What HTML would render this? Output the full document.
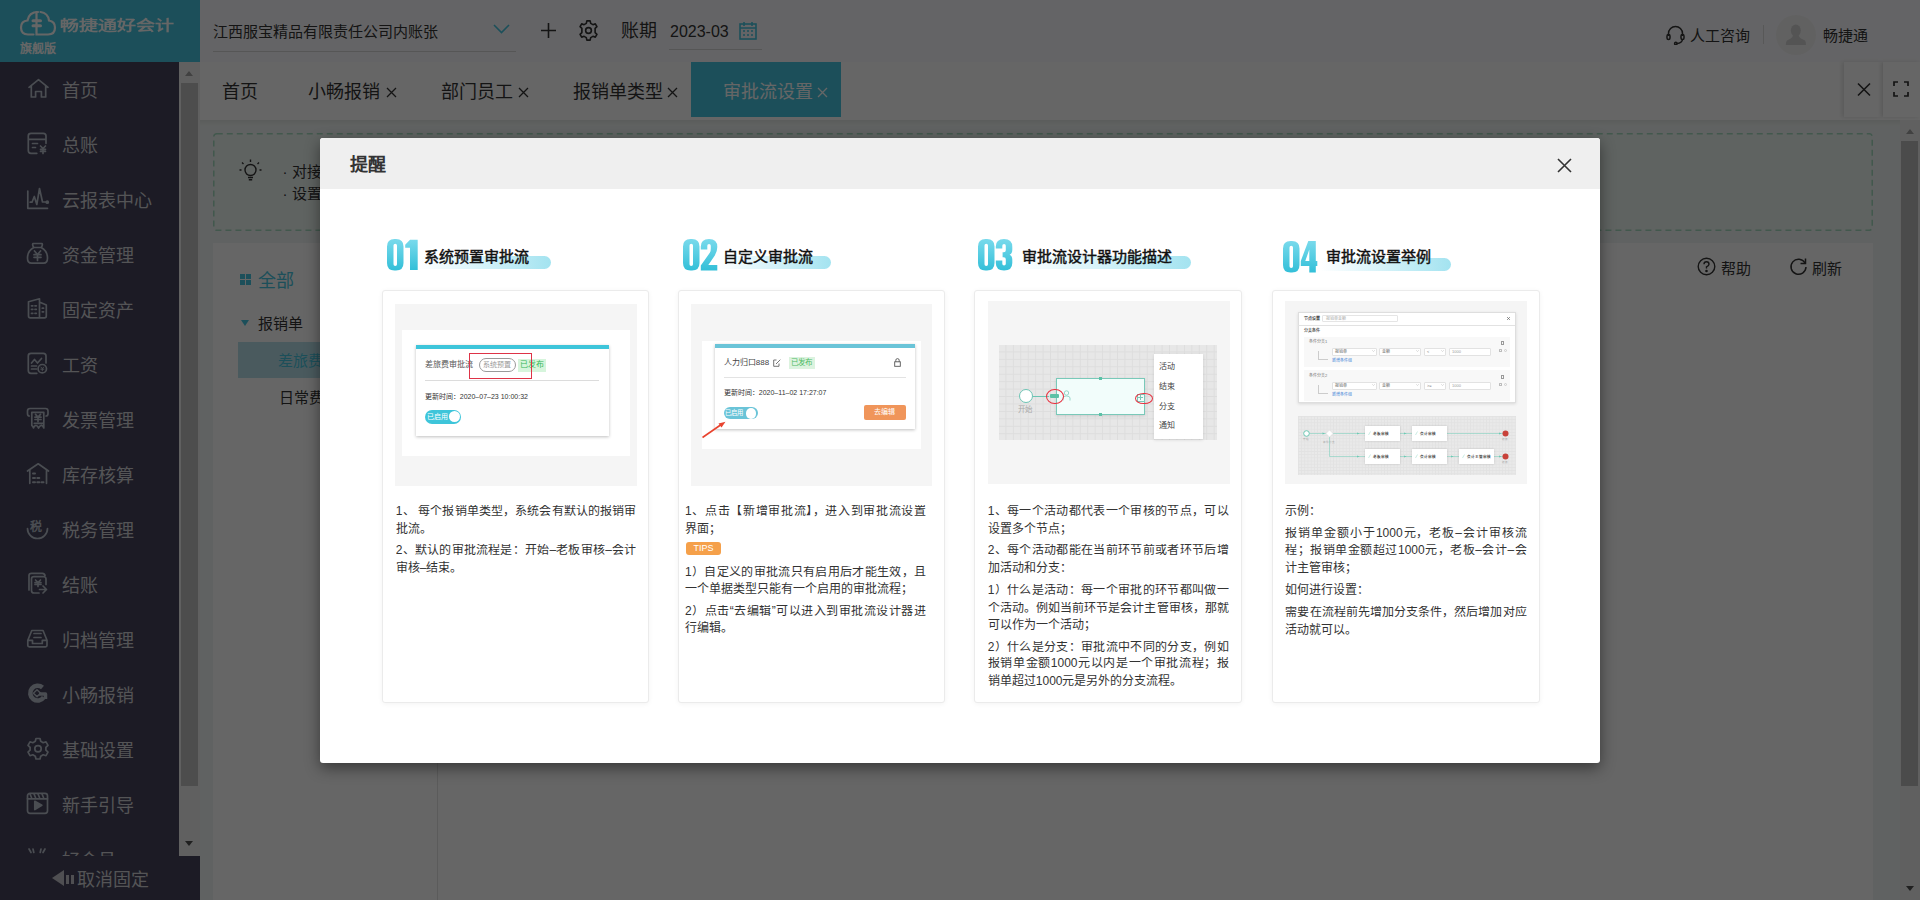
<!DOCTYPE html>
<html lang="zh-CN"><head><meta charset="utf-8">
<style>
*{box-sizing:border-box;margin:0;padding:0}
html,body{width:1920px;height:900px;overflow:hidden;font-family:"Liberation Sans",sans-serif;background:#f1f6f4}
.a{position:absolute;white-space:nowrap;line-height:1}
#side{position:absolute;left:0;top:0;width:200px;height:900px;background:#46445c;overflow:hidden}
#logo{position:absolute;left:0;top:0;width:200px;height:62px;background:#46c6e1}
#menu{position:absolute;left:0;top:62px;width:180px;height:794px;overflow:hidden}
.mi{position:absolute;left:0;width:180px;height:55px;color:#d2d3d8;font-size:18px}
.mi span{position:absolute;left:62.3px;top:19.5px;line-height:1}
.mi svg{position:absolute;left:22px;top:13px;width:30px;height:30px;fill:none;stroke:#b9c0cc;stroke-width:1.7;stroke-linecap:round;stroke-linejoin:round}
#sbar{position:absolute;left:179px;top:62px;width:21px;height:794px;background:#f1f1f1}
#hdr{position:absolute;left:200px;top:0;width:1720px;height:62px;background:#fbfbfe}
#tabs{position:absolute;left:200px;top:62px;width:1720px;height:58px;background:#fff}
.tab{position:absolute;top:21px;font-size:18px;color:#333;line-height:1}
.x{font-size:16px;color:#333}
#content{position:absolute;left:200px;top:120px;width:1700px;height:780px;background:#f1f6f4}
#rbar{position:absolute;left:1900px;top:120px;width:20px;height:780px;background:#f1f1f1}
#ov{position:absolute;left:0;top:0;width:1920px;height:900px;background:rgba(0,0,0,.6)}
#modal{position:absolute;left:320px;top:138px;width:1280px;height:625px;background:#fff;border-radius:3px;box-shadow:0 5px 15px rgba(0,0,0,.45);overflow:hidden}
#mh{position:absolute;left:0;top:0;width:1280px;height:51px;background:#efefef}
.card{position:absolute;top:290.3px;width:267.7px;height:413px;border:1px solid #ebebeb;border-radius:3px;box-shadow:0 1px 5px rgba(0,0,0,.05);background:#fff}
.pl{position:absolute;font-size:12px;line-height:1;color:#333;white-space:nowrap}
.pl.j{text-align:justify;text-align-last:justify;white-space:normal;height:13px;overflow:hidden}
.hl{height:13px;border-radius:0 7px 7px 0;background:linear-gradient(90deg,rgba(169,229,242,0),rgba(169,229,242,.5) 50%,#a3e3f0)}
.ht{font-size:15px;color:#111;-webkit-text-stroke:.45px #111}
.tn{font-size:8px}
.t4{font-size:4px}
.sel{height:8px;background:#fff;border:.7px solid #e2e2e2;border-radius:1px}
.grid{background-color:#e9e9e9;background-image:linear-gradient(#e2e2e2 .5px,transparent .5px),linear-gradient(90deg,#e2e2e2 .5px,transparent .5px);background-size:3.2px 3.2px}
.grid3{background-color:#e7e7e7;background-image:linear-gradient(#dddddd .8px,transparent .8px),linear-gradient(90deg,#dddddd .8px,transparent .8px);background-size:7.45px 7.45px;background-position:-1px -1px}
</style></head><body>

<div id="side">
  <div id="logo">
    <svg class="a" style="left:19px;top:10px" width="38" height="27" viewBox="0 0 38 27" fill="none" stroke="#fff" stroke-width="2.2" stroke-linecap="round">
      <path d="M14.5 24.5 H9 Q2 24.5 2 17.5 Q2 11 8.5 10.5 Q10 2 19 2"/>
      <path d="M21.5 2 Q29 3 30 10.5 Q36 11.5 36 17.5 Q36 24.5 29 24.5 H17.5 V2"/>
      <path d="M14 10.8 H21.5 M14 15.8 H21.5" stroke-width="3"/>
    </svg>
    <div class="a" style="left:60px;top:18px;font-size:19px;color:#fff;font-weight:bold;transform:scale(1,.72);transform-origin:0 0">畅捷通好会计</div>
    <div class="a" style="left:20px;top:43px;font-size:12px;color:#fff;font-weight:bold">旗舰版</div>
  </div>
  <div id="menu">
    <div class="mi" style="top:0"><svg viewBox="0 0 30 30"><path d="M7 12.3 L16.5 4.6 L26 12.3 M9.3 10.5 V22 H13.6 V16.5 H19.4 V22 H23.7 V10.5"/></svg><span>首页</span></div>
    <div class="mi" style="top:55px"><svg viewBox="0 0 30 30"><path d="M24 13.3 V6 Q24 3.3 21.3 3.3 H9 Q6.3 3.3 6.3 6 V20.5 Q6.3 23.3 9 23.3 H14.8 M6.3 9.3 H24 M10.5 13.5 H15.5 M10.5 17.5 H13.5 M18.5 16 L21 18.5 L23.5 16 M21 18.5 V23.5 M18.5 19.3 H23.5 M18.5 21.3 H23.5"/></svg><span>总账</span></div>
    <div class="mi" style="top:110px"><svg viewBox="0 0 30 30"><path d="M5.8 6 V23.3 H25.5 M8.2 17.2 H10 L12.3 11.5 L14.8 19.5 L17.5 3.5 L20.5 17 H24.5"/><circle cx="25.3" cy="17.2" r="1" fill="#b9c0cc"/></svg><span>云报表中心</span></div>
    <div class="mi" style="top:165px"><svg viewBox="0 0 30 30"><path d="M11.8 7.5 Q10 5 11 3.5 H20 Q21 5 19.2 7.5 H11.8 Q5.5 11 5.5 18 Q5.5 23.2 9.5 23.2 H21.5 Q25.5 23.2 25.5 18 Q25.5 11 19.2 7.5 M12.5 11 L15.5 14.5 L18.5 11 M15.5 14.5 V20.5 M12 14.7 H19 M12 17.3 H19"/></svg><span>资金管理</span></div>
    <div class="mi" style="top:220px"><svg viewBox="0 0 30 30"><path d="M6.5 21 V6.8 L17.5 3.8 V22.8 M6.5 21 Q6.5 22.8 8.3 22.8 H22.5 Q24.3 22.8 24.3 21 V10 L18 7.3"/><path d="M9.5 10.8 H10.8 M13 10.8 H14.3 M9.5 14.3 H10.8 M13 14.3 H14.3 M9.5 18.3 H10.8 M13 18.3 H14.3 M20.3 13.2 H21.5 M20.3 16.8 H21.5" stroke-width="1.8"/></svg><span>固定资产</span></div>
    <div class="mi" style="top:275px"><svg viewBox="0 0 30 30"><path d="M24 13 V6 Q24 3.3 21.3 3.3 H9 Q6.3 3.3 6.3 6 V20.5 Q6.3 23.3 9 23.3 H14.8 M9.5 13 L12.5 9.5 L15.5 13 L19.5 8.5 M9.5 16 H14.5 M9.5 19 H14.5"/><circle cx="20.3" cy="18.7" r="4.2"/><path d="M18.8 17 L20.3 18.5 L21.8 17 M20.3 18.5 V20.8 M18.8 19.2 H21.8" stroke-width="1"/></svg><span>工资</span></div>
    <div class="mi" style="top:330px"><svg viewBox="0 0 30 30"><path d="M7.3 11 Q5.5 11 5.5 8.5 V6 Q5.5 3.5 8 3.5 H23.5 Q26 3.5 26 6 V8.5 Q26 11 24 11 M9.8 7.3 H21.8 V23 Q20.5 20 19 20.5 Q17.5 21 16.5 23 Q15.5 20.5 14 20.5 Q12.3 20.5 11.5 23 Q10.8 21 9.8 20.5 Z M13.5 9.3 L16 12 L18.5 9.3 M16 12 V16.5 M13 12.2 H19 M13 14.5 H19 M12.3 18.3 H20.8"/></svg><span>发票管理</span></div>
    <div class="mi" style="top:385px"><svg viewBox="0 0 30 30"><path d="M5.5 11 L16.2 3.8 L26.5 11 M7.8 10 V23.3 M24.5 10 V23.3"/><path d="M11 13.5 H13 M11 18 H13 M15.3 18 H17.3 M11 22.3 H13 M15.3 22.3 H17.3 M19.5 22.3 H21.5" stroke-width="2"/></svg><span>库存核算</span></div>
    <div class="mi" style="top:440px"><svg viewBox="0 0 30 30"><path d="M5.5 13.5 A10 10 0 0 0 25.5 13.5"/><text x="7.5" y="15.5" font-size="12" font-weight="bold" fill="#b9c0cc" stroke="none">税</text></svg><span>税务管理</span></div>
    <div class="mi" style="top:495px"><svg viewBox="0 0 30 30"><path d="M7 20 V5.5 Q7 3.3 9.5 3.3 H20.5 Q22.5 3.3 23 5.5 M24 14.5 V9 Q24 6.7 21.5 6.7 H12 Q9.5 6.7 9.5 9 V20.5 Q9.5 23 12 23 H17 M13.5 10 L16 12.5 L18.5 10 M16 12.5 V16.5 M13 12.7 H19 M13 14.5 H19 M17.5 19.5 H24.5 M21 16 L24.5 19.5 L21 23"/></svg><span>结账</span></div>
    <div class="mi" style="top:550px"><svg viewBox="0 0 30 30"><path d="M5.8 15.3 L9.8 5.5 H21 L25 15.3 V20.5 Q25 21.8 23.5 21.8 H7.3 Q5.8 21.8 5.8 20.5 Z M5.8 15.3 H10.5 V18.5 H20.3 V15.3 H25 M12 8.5 H19 M12 12.5 H19"/></svg><span>归档管理</span></div>
    <div class="mi" style="top:605px"><svg viewBox="0 0 30 30"><path d="M20.5 7.5 A7.4 7.4 0 1 0 21.8 17.3" stroke-width="4.6" stroke-linecap="butt"/><path d="M17 14 H23.5 V19" stroke-width="3.5" stroke-linecap="butt"/><path d="M15 9.8 L18.6 13.2 L15 16.6 L11.4 13.2 Z" stroke-width="1.5"/></svg><span>小畅报销</span></div>
    <div class="mi" style="top:660px"><svg viewBox="0 0 30 30"><path d="M14 3.5 H18 L18.7 6.3 L21.2 7.7 L24 6.8 L26 10.3 L23.9 12.3 V15.2 L26 17.2 L24 20.7 L21.2 19.8 L18.7 21.2 L18 24 H14 L13.3 21.2 L10.8 19.8 L8 20.7 L6 17.2 L8.1 15.2 V12.3 L6 10.3 L8 6.8 L10.8 7.7 L13.3 6.3 Z"/><circle cx="16" cy="13.75" r="3.2"/></svg><span>基础设置</span></div>
    <div class="mi" style="top:715px"><svg viewBox="0 0 30 30"><rect x="5.5" y="3.3" width="20" height="20" rx="2.5"/><path d="M5.5 8.8 H25.5 M8 4 L9.5 7.5 M12 4 L13.5 7.5 M16 4 L17.5 7.5 M20 4 L21.5 7.5"/><path d="M12.8 11.3 L19.8 15.3 L12.8 19.5 Z" fill="#b9c0cc"/></svg><span>新手引导</span></div>
    <div class="mi" style="top:770px"><svg viewBox="0 0 30 30"><path d="M7 4 L9 7.5 M11 4 L11.8 7.5 M19 4 L18.2 7.5 M23 4 L21 7.5"/></svg><span>好会员</span></div>
  </div>
  <div id="sbar">
    <div class="a" style="left:6px;top:9px;width:0;height:0;border-left:4.5px solid transparent;border-right:4.5px solid transparent;border-bottom:5px solid #a3a3a3"></div>
    <div class="a" style="left:2px;top:21px;width:17px;height:703px;background:#c1c1c1"></div>
    <div class="a" style="left:6px;top:779px;width:0;height:0;border-left:4.5px solid transparent;border-right:4.5px solid transparent;border-top:5px solid #505050"></div>
  </div>
  <div class="a" style="left:52px;top:870px;width:0;height:0;border-top:8.5px solid transparent;border-bottom:8.5px solid transparent;border-right:12px solid #c5c6cc"></div>
  <div class="a" style="left:66px;top:875px;width:3px;height:9px;background:#c5c6cc"></div>
  <div class="a" style="left:71px;top:875px;width:3px;height:9px;background:#c5c6cc"></div>
  <div class="a" style="left:77px;top:871px;font-size:18px;color:#d2d3d8">取消固定</div>
</div>

<div id="hdr">
  <div class="a" style="left:13px;top:24px;font-size:15px;color:#333">江西服宝精品有限责任公司内账张</div>
  <svg class="a" style="left:293px;top:24px" width="17" height="10" viewBox="0 0 17 10"><path d="M1 1 L8.5 8.5 L16 1" fill="none" stroke="#46c6e1" stroke-width="1.6"/></svg>
  <div class="a" style="left:13px;top:51px;width:303px;height:1px;background:#d8d8d8"></div>
  <svg class="a" style="left:340px;top:22px" width="17" height="17" viewBox="0 0 17 17"><path d="M1 8.5 H16 M8.5 1 V16" stroke="#333" stroke-width="1.6"/></svg>
  <svg class="a" style="left:377px;top:19px" width="23" height="23" viewBox="0 0 24 24"><path d="M10.3 2 H13.7 L14.3 4.6 L16.6 5.9 L19.1 5.1 L20.8 8 L18.9 9.8 V14.2 L20.8 16 L19.1 18.9 L16.6 18.1 L14.3 19.4 L13.7 22 H10.3 L9.7 19.4 L7.4 18.1 L4.9 18.9 L3.2 16 L5.1 14.2 V9.8 L3.2 8 L4.9 5.1 L7.4 5.9 L9.7 4.6 Z" fill="none" stroke="#333" stroke-width="1.7" stroke-linejoin="round"/><circle cx="12" cy="12" r="3" fill="none" stroke="#333" stroke-width="1.7"/></svg>
  <div class="a" style="left:421px;top:22px;font-size:18px;color:#333">账期</div>
  <div class="a" style="left:470px;top:23.5px;font-size:16px;color:#333">2023-03</div>
  <svg class="a" style="left:539px;top:21px" width="18" height="19" viewBox="0 0 18 19"><rect x="1" y="3" width="16" height="15" fill="none" stroke="#46c6e1" stroke-width="1.6"/><path d="M1 7 H17 M5 1 V5 M13 1 V5" stroke="#46c6e1" stroke-width="1.6"/><path d="M4 10 H6 M8 10 H10 M12 10 H14 M4 14 H6 M8 14 H10 M12 14 H14" stroke="#46c6e1" stroke-width="1.5"/></svg>
  <div class="a" style="left:469px;top:49px;width:93px;height:1px;background:#d8d8d8"></div>
  <svg class="a" style="left:1466px;top:25px" width="19" height="20" viewBox="0 0 19 20" fill="none" stroke="#333" stroke-width="1.5"><path d="M2.5 11 V8.5 A7 7 0 0 1 16.5 8.5 V11"/><rect x="1" y="9.5" width="3" height="5" rx="1.5"/><rect x="15" y="9.5" width="3" height="5" rx="1.5"/><path d="M16.5 14.5 Q16 18 11 18.5"/><circle cx="9.8" cy="18.5" r="1.2"/></svg>
  <div class="a" style="left:1490px;top:28px;font-size:15px;color:#333">人工咨询</div>
  <div class="a" style="left:1563px;top:25px;width:1px;height:19px;background:#ddd"></div>
  <div class="a" style="left:1576px;top:15px;width:40px;height:40px;border-radius:50%;background:#f2f2f3;overflow:hidden">
    <svg class="a" style="left:0;top:0" width="40" height="40" viewBox="0 0 40 40"><ellipse cx="19.8" cy="15.5" rx="5" ry="6" fill="#d2d2d2"/><path d="M17 20 H22.6 Q23 22.5 25 23.5 L29 25.5 Q30 26.5 30 30 H9.8 Q9.8 26.5 11 25.5 L14.8 23.5 Q16.8 22.5 17 20 Z" fill="#d2d2d2"/></svg>
  </div>
  <div class="a" style="left:1623px;top:28px;font-size:15px;color:#333">畅捷通</div>
</div>
<div id="tabs">
  <div class="tab" style="left:22px">首页</div>
  <div class="tab" style="left:108px">小畅报销</div><svg class="a" style="left:185.5px;top:25px" width="11" height="11" viewBox="0 0 11 11"><path d="M1 1 L10 10 M10 1 L1 10" stroke="#333" stroke-width="1.3"/></svg>
  <div class="tab" style="left:241px">部门员工</div><svg class="a" style="left:317.5px;top:25px" width="11" height="11" viewBox="0 0 11 11"><path d="M1 1 L10 10 M10 1 L1 10" stroke="#333" stroke-width="1.3"/></svg>
  <div class="tab" style="left:373px">报销单类型</div><svg class="a" style="left:466.5px;top:25px" width="11" height="11" viewBox="0 0 11 11"><path d="M1 1 L10 10 M10 1 L1 10" stroke="#333" stroke-width="1.3"/></svg>
  <div class="a" style="left:491px;top:0;width:150px;height:55px;background:#46c6e1"></div>
  <div class="tab" style="left:523px;color:#fff">审批流设置</div><svg class="a" style="left:616.5px;top:25px" width="11" height="11" viewBox="0 0 11 11"><path d="M1 1 L10 10 M10 1 L1 10" stroke="#fff" stroke-width="1.3"/></svg>
  <div class="a" style="left:1644px;top:0;width:38px;height:55px;background:#fff;box-shadow:-2px 0 4px rgba(0,0,0,.12)"></div>
  <svg class="a" style="left:1657px;top:20px" width="14" height="15" viewBox="0 0 14 15"><path d="M1 1.5 L13 13.5 M13 1.5 L1 13.5" stroke="#333" stroke-width="1.6"/></svg>
  <div class="a" style="left:1683px;top:0;width:37px;height:55px;background:#fff;box-shadow:-2px 0 4px rgba(0,0,0,.12)"></div>
  <svg class="a" style="left:1693px;top:19px" width="16" height="16" viewBox="0 0 16 16" fill="none" stroke="#333" stroke-width="1.7"><path d="M1 5 V1 H5 M11 1 H15 V5 M15 11 V15 H11 M5 15 H1 V11"/></svg>
</div>
<div id="content">
  <div class="a" style="left:0;top:0;width:1700px;height:6px;background:linear-gradient(rgba(0,0,0,.06),rgba(0,0,0,0))"></div>
  <svg class="a" style="left:13px;top:13px" width="1660" height="98"><rect x="0.75" y="0.75" width="1658.5" height="96.5" rx="3" fill="#eef7f3" stroke="#a6dcc0" stroke-width="1.6" stroke-dasharray="6 4"/></svg>
  <svg class="a" style="left:38px;top:38px" width="25" height="25" viewBox="0 0 25 25" fill="none" stroke="#333" stroke-width="1.4"><circle cx="12.5" cy="12" r="5.5"/><path d="M10 19.5 H15 M10.8 21.8 H14.2 M12.5 1.5 V4 M4 4.5 L5.5 6 M21 4.5 L19.5 6 M1.5 12 H3.5 M21.5 12 H23.5"/></svg>
  <div class="a" style="left:82.5px;top:43.5px;font-size:15px;color:#333">· 对接</div>
  <div class="a" style="left:82.5px;top:65.5px;font-size:15px;color:#333">· 设置</div>
  <div class="a" style="left:13px;top:123px;width:1660px;height:657px;background:#fff"></div>
  <div class="a" style="left:237px;top:123px;width:1px;height:657px;background:#e4e4e4"></div>
  <div class="a" style="left:40px;top:154px;width:5px;height:5px;background:#46c6e1;box-shadow:6px 0 #46c6e1,0 6px #46c6e1,6px 6px #46c6e1"></div>
  <div class="a" style="left:58px;top:152px;font-size:18px;color:#46c6e1">全部</div>
  <div class="a" style="left:41px;top:200px;width:0;height:0;border-left:4.5px solid transparent;border-right:4.5px solid transparent;border-top:6px solid #46c6e1"></div>
  <div class="a" style="left:58px;top:196px;font-size:15px;color:#333">报销单</div>
  <div class="a" style="left:38px;top:222px;width:199px;height:36px;background:#b9e1ea"></div>
  <div class="a" style="left:78px;top:233px;font-size:15px;color:#46c6e1">差旅费审批流</div>
  <div class="a" style="left:79px;top:270px;font-size:15px;color:#333">日常费用报销</div>
  <svg class="a" style="left:1497px;top:137px" width="19" height="19" viewBox="0 0 19 19" fill="none" stroke="#333" stroke-width="1.4"><circle cx="9.5" cy="9.5" r="8.3"/><path d="M7 7.3 Q7 4.8 9.5 4.8 Q12 4.8 12 7.2 Q12 8.7 9.5 9.8 V11.5"/><circle cx="9.5" cy="14" r=".6" fill="#333"/></svg>
  <div class="a" style="left:1521px;top:141px;font-size:15px;color:#333">帮助</div>
  <svg class="a" style="left:1589px;top:137px" width="19" height="19" viewBox="0 0 19 19" fill="none" stroke="#333" stroke-width="1.5"><path d="M16 6 A7.5 7.5 0 1 0 17 10"/><path d="M16.5 1.5 V6.5 H11.5"/></svg>
  <div class="a" style="left:1612px;top:141px;font-size:15px;color:#333">刷新</div>
</div>
<div id="rbar">
  <div class="a" style="left:6px;top:9px;width:0;height:0;border-left:4.5px solid transparent;border-right:4.5px solid transparent;border-bottom:5px solid #a3a3a3"></div>
  <div class="a" style="left:1px;top:21px;width:17px;height:645px;background:#bcbcbc"></div>
  <div class="a" style="left:6px;top:766px;width:0;height:0;border-left:4.5px solid transparent;border-right:4.5px solid transparent;border-top:5px solid #505050"></div>
</div>
<div id="ov"></div>
<div id="modal">
  <div id="mh"></div>
  <div class="a" style="left:30px;top:18px;font-size:18px;font-weight:bold;color:#333">提醒</div>
  <svg class="a" style="left:1237px;top:20px" width="15" height="15" viewBox="0 0 15 15"><path d="M1 1 L14 14 M14 1 L1 14" stroke="#333" stroke-width="1.6"/></svg>
  <div class="a" style="left:-320px;top:-138px;width:1920px;height:900px">
<svg class="a" style="left:387px;top:239px" width="36" height="32" viewBox="0 0 36 32"><defs><linearGradient id="g1" x1="0" y1="0" x2="0" y2="1"><stop offset="0" stop-color="#79daec"/><stop offset="1" stop-color="#33bfd8"/></linearGradient></defs><g fill="url(#g1)"><path fill-rule="evenodd" d="M7.5 0 H9 Q16.5 0 16.5 7.5 V24 Q16.5 31.5 9 31.5 H7.5 Q0 31.5 0 24 V7.5 Q0 0 7.5 0 Z M8.25 4.8 Q6.5 4.8 6.5 6.5 V25.3 Q6.5 27 8.25 27 Q10 27 10 25.3 V6.5 Q10 4.8 8.25 4.8 Z"/><g transform="translate(16.5,0)"></g></g><g fill="url(#g1)" transform="translate(18.2,0)"><path d="M4.8 0.8 H12.5 V31 H4.8 V8.8 H0 V5.7 Z"/></g></svg>
<div class="a hl" style="left:418px;top:256px;width:132.5px"></div>
<div class="a ht" style="left:424px;top:249px">系统预置审批流</div><svg class="a" style="left:683.3px;top:239px" width="36" height="32" viewBox="0 0 36 32"><defs><linearGradient id="g2" x1="0" y1="0" x2="0" y2="1"><stop offset="0" stop-color="#79daec"/><stop offset="1" stop-color="#33bfd8"/></linearGradient></defs><g fill="url(#g2)"><path fill-rule="evenodd" d="M7.5 0 H9 Q16.5 0 16.5 7.5 V24 Q16.5 31.5 9 31.5 H7.5 Q0 31.5 0 24 V7.5 Q0 0 7.5 0 Z M8.25 4.8 Q6.5 4.8 6.5 6.5 V25.3 Q6.5 27 8.25 27 Q10 27 10 25.3 V6.5 Q10 4.8 8.25 4.8 Z"/><g transform="translate(16.5,0)"></g></g><g fill="url(#g2)" transform="translate(17.8,0)"><path d="M0 10.5 V7.5 Q0 0 8.25 0 Q16.5 0 16.5 8 Q16.5 12.5 14 16.5 L7.5 26 H16.5 V31.5 H0 V26.5 L9.2 13.5 Q10 12 10 9.5 V6.8 Q10 5 8.25 5 Q6.5 5 6.5 6.8 V10.5 Z"/></g></svg>
<div class="a hl" style="left:717px;top:256px;width:114px"></div>
<div class="a ht" style="left:723px;top:249px">自定义审批流</div><svg class="a" style="left:977.8px;top:239px" width="36" height="32" viewBox="0 0 36 32"><defs><linearGradient id="g3" x1="0" y1="0" x2="0" y2="1"><stop offset="0" stop-color="#79daec"/><stop offset="1" stop-color="#33bfd8"/></linearGradient></defs><g fill="url(#g3)"><path fill-rule="evenodd" d="M7.5 0 H9 Q16.5 0 16.5 7.5 V24 Q16.5 31.5 9 31.5 H7.5 Q0 31.5 0 24 V7.5 Q0 0 7.5 0 Z M8.25 4.8 Q6.5 4.8 6.5 6.5 V25.3 Q6.5 27 8.25 27 Q10 27 10 25.3 V6.5 Q10 4.8 8.25 4.8 Z"/><g transform="translate(16.5,0)"></g></g><g fill="url(#g3)" transform="translate(17.8,0)"><path d="M0 9.5 V7.5 Q0 0 8.25 0 Q16.5 0 16.5 8 V11 Q16.5 14.5 13.8 15.75 Q16.5 17 16.5 20.5 V24 Q16.5 31.5 8.25 31.5 Q0 31.5 0 24 V21.5 H6.5 V24.8 Q6.5 26.5 8.25 26.5 Q10 26.5 10 24.8 V20.3 Q10 18.2 8 18.2 H6.8 V13.3 H8 Q10 13.3 10 11.3 V6.8 Q10 5 8.25 5 Q6.5 5 6.5 6.8 V9.5 Z"/></g></svg>
<div class="a hl" style="left:1015.6px;top:256px;width:175.39999999999998px"></div>
<div class="a ht" style="left:1021.6px;top:249px">审批流设计器功能描述</div><svg class="a" style="left:1282.5px;top:241px" width="36" height="32" viewBox="0 0 36 32"><defs><linearGradient id="g4" x1="0" y1="0" x2="0" y2="1"><stop offset="0" stop-color="#79daec"/><stop offset="1" stop-color="#33bfd8"/></linearGradient></defs><g fill="url(#g4)"><path fill-rule="evenodd" d="M7.5 0 H9 Q16.5 0 16.5 7.5 V24 Q16.5 31.5 9 31.5 H7.5 Q0 31.5 0 24 V7.5 Q0 0 7.5 0 Z M8.25 4.8 Q6.5 4.8 6.5 6.5 V25.3 Q6.5 27 8.25 27 Q10 27 10 25.3 V6.5 Q10 4.8 8.25 4.8 Z"/><g transform="translate(16.5,0)"></g></g><g fill="url(#g4)" transform="translate(17.8,0)"><path fill-rule="evenodd" d="M7.5 0 H15 V20 H16.5 V25 H15 V31.5 H8.5 V25 H0 V20 Z M8.5 8.5 L4.5 20 H8.5 Z"/></g></svg>
<div class="a hl" style="left:1320px;top:258px;width:131px"></div>
<div class="a ht" style="left:1326px;top:249px">审批流设置举例</div>
  <div class="card" style="left:381.7px"></div>
  <div class="card" style="left:677.8px"></div>
  <div class="card" style="left:974.4px"></div>
  <div class="card" style="left:1271.9px"></div>
<div class="pl j" style="left:395.8px;top:504.8px;width:240.5px">1、&nbsp;每个报销单类型，系统会有默认的报销审</div>
<div class="pl" style="left:395.8px;top:522.7px;width:240.5px">批流。</div>
<div class="pl j" style="left:395.8px;top:544.4px;width:240.5px">2、默认的审批流程是：开始–老板审核–会计</div>
<div class="pl" style="left:395.8px;top:562.3px;width:240.5px">审核–结束。</div><div class="pl j" style="left:685px;top:504.8px;width:241px">1、点击【新增审批流】，进入到审批流设置</div>
<div class="pl" style="left:685px;top:522.7px;width:241px">界面；</div>
<div class="pl j" style="left:685px;top:566.2px;width:241px">1）自定义的审批流只有启用后才能生效，且</div>
<div class="pl" style="left:685px;top:583.3px;width:241px">一个单据类型只能有一个启用的审批流程；</div>
<div class="pl j" style="left:685px;top:605px;width:241px">2）点击“去编辑”可以进入到审批流设计器进</div>
<div class="pl" style="left:685px;top:622.4px;width:241px">行编辑。</div><div class="pl j" style="left:987.8px;top:504.8px;width:241px">1、每一个活动都代表一个审核的节点，可以</div>
<div class="pl" style="left:987.8px;top:522.7px;width:241px">设置多个节点；</div>
<div class="pl j" style="left:987.8px;top:544.4px;width:241px">2、每个活动都能在当前环节前或者环节后增</div>
<div class="pl" style="left:987.8px;top:562.3px;width:241px">加活动和分支：</div>
<div class="pl j" style="left:987.8px;top:584px;width:241px">1）什么是活动：每一个审批的环节都叫做一</div>
<div class="pl j" style="left:987.8px;top:601.9px;width:241px">个活动。例如当前环节是会计主管审核，那就</div>
<div class="pl" style="left:987.8px;top:619px;width:241px">可以作为一个活动；</div>
<div class="pl j" style="left:987.8px;top:640.8px;width:241px">2）什么是分支：审批流中不同的分支，例如</div>
<div class="pl j" style="left:987.8px;top:657.4px;width:241px">报销单金额1000元以内是一个审批流程；报</div>
<div class="pl" style="left:987.8px;top:674.5px;width:241px">销单超过1000元是另外的分支流程。</div><div class="pl" style="left:1285.4px;top:504.8px;width:241.2px">示例：</div>
<div class="pl j" style="left:1285.4px;top:526.5px;width:241.2px">报销单金额小于1000元，老板–会计审核流</div>
<div class="pl j" style="left:1285.4px;top:544.4px;width:241.2px">程；报销单金额超过1000元，老板–会计–会</div>
<div class="pl" style="left:1285.4px;top:562.3px;width:241.2px">计主管审核；</div>
<div class="pl" style="left:1285.4px;top:584px;width:241.2px">如何进行设置：</div>
<div class="pl j" style="left:1285.4px;top:605.8px;width:241.2px">需要在流程前先增加分支条件，然后增加对应</div>
<div class="pl" style="left:1285.4px;top:623.7px;width:241.2px">活动就可以。</div>
  <div class="a" style="left:686.2px;top:542.4px;width:34.5px;height:12.3px;border-radius:3px;background:#f5a04a;color:#fff;font-size:9px;line-height:12.3px;text-align:center">TIPS</div>
  
  <!-- card1 image -->
  <div class="a" style="left:395.2px;top:303.5px;width:241.8px;height:182px;background:#f5f5f5"></div>
  <div class="a" style="left:402px;top:329.7px;width:228px;height:126.3px;background:#fff"></div>
  <div class="a" style="left:415.5px;top:344.8px;width:193px;height:91.7px;background:#fff;border-top:4.5px solid #3ec5da;box-shadow:0 1px 3px rgba(0,0,0,.25)"></div>
  <div class="a tn" style="left:424.8px;top:361px;color:#555">差旅费审批流</div>
  <div class="a" style="left:479px;top:358.4px;width:36.8px;height:13.3px;border:1px solid #9a9a9a;border-radius:7px;font-size:7px;color:#999;line-height:11.3px;text-align:center">系统预置</div>
  <div class="a" style="left:518.4px;top:358.8px;width:28px;height:12.9px;background:#d6f5dc;font-size:8px;color:#36b65a;line-height:12.9px;text-align:center">已发布</div>
  <div class="a" style="left:469.4px;top:352.5px;width:62.3px;height:26.2px;border:1.5px solid #de3347"></div>
  <div class="a" style="left:424.8px;top:380px;width:174.2px;height:1px;background:#dcdcdc"></div>
  <div class="a tn" style="left:424.8px;top:393.3px;font-size:7px;color:#333">更新时间：2020–07–23 10:00:32</div>
  <div class="a" style="left:424.8px;top:410px;width:36.2px;height:13.5px;border-radius:7px;background:#3ec5da"></div>
  <div class="a" style="left:449px;top:411.2px;width:11px;height:11px;border-radius:50%;background:#fff"></div>
  <div class="a" style="left:426.7px;top:413.3px;font-size:7px;color:#fff">已启用</div>

  <!-- card2 image -->
  <div class="a" style="left:690.5px;top:303.5px;width:241.5px;height:182px;background:#f5f5f5"></div>
  <div class="a" style="left:701.7px;top:340.9px;width:219.8px;height:108.1px;background:#fff"></div>
  <div class="a" style="left:715px;top:344px;width:199.5px;height:85.3px;background:#fff;border-top:4.5px solid #6ac4d8;box-shadow:0 1px 3px rgba(0,0,0,.25)"></div>
  <div class="a tn" style="left:723.8px;top:359px;color:#444">人力归口888</div>
  <svg class="a" style="left:773px;top:358.5px" width="8" height="8" viewBox="0 0 8 8" fill="none" stroke="#666" stroke-width=".9"><path d="M6 4.5 V7.3 H.7 V1 H3.5 M3 5 L7.3 .7"/></svg>
  <div class="a" style="left:788.7px;top:357.2px;width:26.1px;height:12.1px;background:#dcf3df;font-size:7.5px;color:#4cba64;line-height:12.1px;text-align:center">已发布</div>
  <svg class="a" style="left:893.5px;top:358px" width="7" height="9" viewBox="0 0 7 9" fill="none" stroke="#555" stroke-width=".9"><rect x=".7" y="3.8" width="5.6" height="4.5"/><path d="M1.8 3.8 V2.3 Q1.8 .6 3.5 .6 Q5.2 .6 5.2 2.3 V3.8"/></svg>
  <div class="a" style="left:723.8px;top:377px;width:182px;height:1px;background:#e3e3e3"></div>
  <div class="a tn" style="left:723.8px;top:389.3px;font-size:7px;color:#333">更新时间：2020–11–02 17:27:07</div>
  <div class="a" style="left:723.8px;top:407.4px;width:33.9px;height:12.1px;border-radius:6px;background:#6ac4d8"></div>
  <div class="a" style="left:746px;top:408.4px;width:10.2px;height:10.2px;border-radius:50%;background:#fff"></div>
  <div class="a" style="left:725px;top:410px;font-size:6.3px;color:#fff">已启用</div>
  <div class="a" style="left:863.8px;top:405px;width:42px;height:14.5px;border-radius:2px;background:#f0955a;font-size:7px;color:#fff;line-height:14.5px;text-align:center">去编辑</div>
  <svg class="a" style="left:700px;top:419px" width="30" height="21" viewBox="0 0 30 21"><path d="M2.5 18.5 L22 5" stroke="#e8432e" stroke-width="1.6"/><path d="M25.5 2.8 L18.5 4.5 L21.5 8.5 Z" fill="#e8432e"/></svg>

  <!-- card3 image -->
  <div class="a" style="left:987.9px;top:301.2px;width:241.9px;height:182.5px;background:#f5f5f5"></div>
  <div class="a grid3" style="left:998.8px;top:344.8px;width:218.2px;height:95.7px"></div>
  <div class="a" style="left:1055.5px;top:378.2px;width:89.2px;height:36.6px;background:#f2fdfb;border:1px solid #79c9b9;box-shadow:0 1px 3px rgba(0,0,0,.12)"></div>
  <div class="a" style="left:1099.3px;top:376.8px;width:3.2px;height:3.2px;background:#5bc1a6"></div>
  <div class="a" style="left:1099.3px;top:413.3px;width:3.2px;height:3.2px;background:#5bc1a6"></div>
  <div class="a" style="left:1019px;top:389.2px;width:14px;height:14px;border-radius:50%;background:#fff;border:1.3px solid #6cc4b4"></div>
  <div class="a" style="left:1033px;top:396px;width:16px;height:1px;background:#6cc4b4"></div>
  <div class="a tn" style="left:1018px;top:406px;font-size:7.5px;color:#aaa">开始</div>
  <div class="a" style="left:1049.5px;top:394.2px;width:9px;height:4px;background:#5bc1a6;border-radius:1px"></div>
  <svg class="a" style="left:1062px;top:390px" width="9" height="11" viewBox="0 0 9 11" fill="none" stroke="#8fd3c4" stroke-width=".9"><circle cx="4.5" cy="3" r="2.2"/><path d="M1 10.5 V8 Q1 6 4.5 6 Q8 6 8 8 V10.5"/></svg>
  <div class="a" style="left:1046px;top:389px;width:17.5px;height:15.3px;border-radius:50%;border:1.8px solid #e8303f"></div>
  <div class="a" style="left:1136.5px;top:393.5px;width:8px;height:8px;background:#f2fdfb;border:1px solid #79c9b9"></div>
  <div class="a" style="left:1140px;top:395px;width:1px;height:5px;background:#79c9b9;box-shadow:0 0 0 0 #79c9b9"></div><div class="a" style="left:1138px;top:397px;width:5px;height:1px;background:#79c9b9"></div><div class="a" style="left:1135.3px;top:392.7px;width:18px;height:11.6px;border-radius:50%;border:1.8px solid #e8303f"></div>
  <div class="a" style="left:1154px;top:353.7px;width:49px;height:85.2px;background:#fff;box-shadow:0 1px 3px rgba(0,0,0,.12)"></div>
  <div class="a tn" style="left:1158.7px;top:362.5px;color:#444">活动</div>
  <div class="a tn" style="left:1158.7px;top:382.5px;color:#444">结束</div>
  <div class="a tn" style="left:1158.7px;top:402.5px;color:#444">分支</div>
  <div class="a tn" style="left:1158.7px;top:422.4px;color:#444">通知</div>

  <!-- card4 image -->
  <div class="a" style="left:1285px;top:301.2px;width:241.6px;height:182.5px;background:#f5f5f5"></div>
  <div class="a" style="left:1297.5px;top:311.5px;width:218px;height:91.7px;background:#fff;border:1px solid #dedede;box-shadow:0 1px 3px rgba(0,0,0,.12)"></div>
  <div class="a" style="left:1298px;top:325.3px;width:217px;height:1px;background:#e2e2e2"></div>
  <div class="a t4" style="left:1303.5px;top:316.5px;font-weight:bold;color:#444">节点设置</div>
  <div class="a" style="left:1321.5px;top:314.5px;width:76px;height:7px;border:1px solid #e5e5e5;border-radius:1px"></div>
  <div class="a t4" style="left:1326px;top:316.5px;color:#aaa">报销单金额</div>
  <svg class="a" style="left:1506px;top:316px" width="5" height="5" viewBox="0 0 5 5"><path d="M1 1 L4 4 M4 1 L1 4" stroke="#555" stroke-width=".6"/></svg>
  <div class="a t4" style="left:1303.5px;top:329px;color:#555;font-weight:bold">分支条件</div>
  <div class="a" style="left:1303.5px;top:336.5px;width:206.5px;height:30.5px;background:#f8f8f8"></div>
  <div class="a" style="left:1303.5px;top:370px;width:206.5px;height:31px;background:#f8f8f8"></div>
  <div class="a t4" style="left:1309px;top:340px;color:#777">条件分支1</div>
  <div class="a t4" style="left:1309px;top:373.5px;color:#777">条件分支2</div>
  <div class="a" style="left:1318px;top:351px;width:10px;height:9px;border-left:.8px solid #ccc;border-bottom:.8px solid #ccc"></div>
  <div class="a" style="left:1318px;top:385px;width:10px;height:9px;border-left:.8px solid #ccc;border-bottom:.8px solid #ccc"></div>
  <div class="a sel" style="left:1332px;top:347.5px;width:44.5px"></div><svg class="a" style="left:1371.5px;top:350.3px" width="3" height="2" viewBox="0 0 3 2"><path d="M.2 .2 L1.5 1.6 L2.8 .2" stroke="#bbb" stroke-width=".5" fill="none"/></svg>
  <div class="a sel" style="left:1379px;top:347.5px;width:41.5px"></div><svg class="a" style="left:1415.5px;top:350.3px" width="3" height="2" viewBox="0 0 3 2"><path d="M.2 .2 L1.5 1.6 L2.8 .2" stroke="#bbb" stroke-width=".5" fill="none"/></svg>
  <div class="a sel" style="left:1423.5px;top:347.5px;width:22.5px"></div><svg class="a" style="left:1441.0px;top:350.3px" width="3" height="2" viewBox="0 0 3 2"><path d="M.2 .2 L1.5 1.6 L2.8 .2" stroke="#bbb" stroke-width=".5" fill="none"/></svg>
  <div class="a sel" style="left:1448.5px;top:347.5px;width:42px"></div>
  <div class="a sel" style="left:1332px;top:381.5px;width:44.5px"></div><svg class="a" style="left:1371.5px;top:384.3px" width="3" height="2" viewBox="0 0 3 2"><path d="M.2 .2 L1.5 1.6 L2.8 .2" stroke="#bbb" stroke-width=".5" fill="none"/></svg>
  <div class="a sel" style="left:1379px;top:381.5px;width:41.5px"></div><svg class="a" style="left:1415.5px;top:384.3px" width="3" height="2" viewBox="0 0 3 2"><path d="M.2 .2 L1.5 1.6 L2.8 .2" stroke="#bbb" stroke-width=".5" fill="none"/></svg>
  <div class="a sel" style="left:1423.5px;top:381.5px;width:22.5px"></div><svg class="a" style="left:1441.0px;top:384.3px" width="3" height="2" viewBox="0 0 3 2"><path d="M.2 .2 L1.5 1.6 L2.8 .2" stroke="#bbb" stroke-width=".5" fill="none"/></svg>
  <div class="a sel" style="left:1448.5px;top:381.5px;width:42px"></div>
  <div class="a t4" style="left:1332px;top:358.5px;color:#3b82d6">新增条件组</div>
  <div class="a t4" style="left:1332px;top:392.5px;color:#3b82d6">新增条件组</div>
  <div class="a" style="left:1501px;top:341px;width:3px;height:4px;border:.7px solid #999"></div>
  <div class="a" style="left:1501px;top:375px;width:3px;height:4px;border:.7px solid #999"></div>
  <div class="a t4" style="left:1335px;top:349.7px;color:#666">报销单</div>
  <div class="a t4" style="left:1382px;top:349.7px;color:#666">金额</div>
  <div class="a t4" style="left:1427px;top:349.7px;color:#777">&lt;</div>
  <div class="a t4" style="left:1452px;top:349.7px;color:#999">1000</div>
  <div class="a" style="left:1499px;top:348.5px;width:2.5px;height:3.5px;border:.6px solid #bbb;border-radius:.5px"></div>
  <div class="a" style="left:1504px;top:348.5px;width:3px;height:3px;border:.6px solid #ccc;border-radius:50%"></div>
  <div class="a t4" style="left:1335px;top:383.7px;color:#666">报销单</div>
  <div class="a t4" style="left:1382px;top:383.7px;color:#666">金额</div>
  <div class="a t4" style="left:1427px;top:383.7px;color:#777">&gt;=</div>
  <div class="a t4" style="left:1452px;top:383.7px;color:#999">1000</div>
  <div class="a" style="left:1499px;top:382.5px;width:2.5px;height:3.5px;border:.6px solid #bbb;border-radius:.5px"></div>
  <div class="a" style="left:1504px;top:382.5px;width:3px;height:3px;border:.6px solid #ccc;border-radius:50%"></div>
  <div class="a grid" style="left:1297.5px;top:416px;width:218.5px;height:58.8px"></div>
  <svg class="a" style="left:1297px;top:416px" width="219" height="59" viewBox="0 0 219 59">
    <g stroke="#7fd0bd" stroke-width=".6" fill="none">
      <path d="M12 17.5 H208 M32.5 21 V40.5 H208"/>
    </g>
    <g fill="#6cc9b3"><path d="M25.5 16.5 L28 17.5 L25.5 18.5Z M60 16.5 L62.5 17.5 L60 18.5Z M107 16.5 L109.5 17.5 L107 18.5Z M202 16.5 L204.5 17.5 L202 18.5Z M60 39.5 L62.5 40.5 L60 41.5Z M107 39.5 L109.5 40.5 L107 41.5Z M154 39.5 L156.5 40.5 L154 41.5Z M202 39.5 L204.5 40.5 L202 41.5Z"/></g>
    <circle cx="9.5" cy="17.5" r="2.8" fill="#fff" stroke="#6cc9b3" stroke-width="1"/>
    <path d="M32.5 14 L36 17.5 L32.5 21 L29 17.5 Z" fill="#fff" stroke="#ddd" stroke-width=".5"/>
    <circle cx="208.5" cy="17.5" r="3" fill="#c8423a"/>
    <circle cx="208.5" cy="40.5" r="3" fill="#c8423a"/>
    <g fill="#fff" style="filter:drop-shadow(0 .5px .8px rgba(0,0,0,.15))">
      <rect x="68" y="10" width="35" height="15"/><rect x="115" y="10" width="35" height="15"/>
      <rect x="68" y="33" width="35" height="15"/><rect x="115" y="33" width="35" height="15"/><rect x="162" y="33" width="35" height="15"/>
    </g>
    <g fill="none" stroke="#a8dfd0" stroke-width=".6"><path d="M71.5 19 L73.5 15.5 M118.5 19 L120.5 15.5 M71.5 42 L73.5 38.5 M118.5 42 L120.5 38.5 M165.5 42 L167.5 38.5"/></g>
    <g fill="#444" font-size="3.6" font-weight="bold"><text x="76" y="18.8">老板审核</text><text x="123" y="18.8">会计审核</text><text x="76" y="41.8">老板审核</text><text x="123" y="41.8">会计审核</text><text x="170" y="41.8">会计主管审核</text></g>
    <g fill="#aaa" font-size="2.6"><text x="6" y="24">开始</text><text x="26" y="27">条件分支</text><text x="205" y="24">结束</text><text x="205" y="47">结束</text></g>
  </svg>

  </div>
</div>
</body></html>
